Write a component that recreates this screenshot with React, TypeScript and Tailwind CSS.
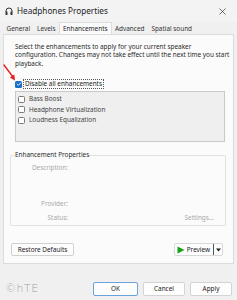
import React from "react";

const font = { fontFamily: '"Noto Sans", "Liberation Sans", sans-serif' };

function Box({ checked }: { checked?: boolean }) {
  if (checked) {
    return (
      <span className="flex h-[7px] w-[7px] shrink-0 items-center justify-center rounded-[1.5px] bg-[#1a6fc9]">
        <svg width="6" height="6" viewBox="0 0 6 6" fill="none">
          <path d="M1.2 3.1 L2.4 4.3 L4.8 1.7" stroke="white" strokeWidth="0.9" strokeLinecap="round" strokeLinejoin="round" />
        </svg>
      </span>
    );
  }
  return <span className="h-[7px] w-[7px] shrink-0 rounded-[1.5px] border border-[#7a7a7a] bg-white" />;
}

function Tab({ label, active }: { label: string; active?: boolean }) {
  return (
    <div
      className={
        active
          ? "flex h-[12px] items-center bg-[#fbfbfb] px-[3px] text-[#1b1b1b] border-x border-t border-[#dcdcdc]"
          : "flex h-[10px] items-center px-[3.5px] text-[#333]"
      }
    >
      {label}
    </div>
  );
}

export default function App() {
  return (
    <div className="relative h-[300px] w-[237px] overflow-hidden bg-[#f0f0f0] text-[6.4px] text-[#222]" style={font}>
      {/* title bar */}
      <div className="flex h-[22px] items-center bg-[#f3f3f3] pl-[5px] pr-[11px]">
        <svg width="8" height="9" viewBox="0 0 8 9" className="shrink-0">
          <path d="M1 5 V4 A3 3 0 0 1 7 4 V5" stroke="#333" strokeWidth="1" fill="none" />
          <rect x="0.5" y="4.5" width="2" height="3.5" rx="0.6" fill="#333" />
          <rect x="5.5" y="4.5" width="2" height="3.5" rx="0.6" fill="#333" />
        </svg>
        <span className="ml-[4px] text-[8.2px] text-[#1c1c1c]">Headphones Properties</span>
        <svg width="7" height="7" viewBox="0 0 7 7" className="ml-auto">
          <path d="M0.5 0.5 L6.5 6.5 M6.5 0.5 L0.5 6.5" stroke="#333" strokeWidth="0.7" />
        </svg>
      </div>

      {/* tabs */}
      <div className="flex h-[12px] items-end pl-[3px] text-[6.4px]">
        <Tab label="General" />
        <Tab label="Levels" />
        <Tab label="Enhancements" active />
        <Tab label="Advanced" />
        <Tab label="Spatial sound" />
      </div>

      {/* page */}
      <div className="mx-[3px] flex h-[230px] flex-col border border-[#dcdcdc] bg-[#fbfbfb] pt-[8px]">
        <p className="pl-[11px] leading-[8.4px] text-[#2a2a2a] whitespace-nowrap">
          Select the enhancements to apply for your current speaker
          <br />
          configuration. Changes may not take effect until the next time you start
          <br />
          playback.
        </p>

        <div className="mt-[11px] flex items-center pl-[11px]">
          <Box checked />
          <span className="ml-[1px] border border-dotted border-[#555] px-[1px] leading-[8px]">Disable all enhancements</span>
        </div>

        <div className="ml-[11px] mr-[8px] mt-[2px] flex h-[51px] flex-col gap-[2.5px] border border-[#c9c9c9] bg-[#efefef] pl-[2px] pt-[3px]">
          {["Bass Boost", "Headphone Virtualization", "Loudness Equalization"].map((t) => (
            <div key={t} className="flex items-center gap-[4px] leading-[8px] text-[#444]">
              <Box />
              <span>{t}</span>
            </div>
          ))}
        </div>

        <div className="relative ml-[6px] mr-[7px] mt-[13px] h-[71px] rounded-[2px] border border-[#e2e2e2]">
          <span className="absolute -top-[5px] left-[4px] bg-[#fbfbfb] leading-[8px] text-[#2a2a2a]">
            Enhancement Properties
          </span>
          <div className="flex h-full flex-col pt-[8px] pr-[11px] text-[#a9a9a9]">
            <div className="w-[57px] text-right leading-[8px]">Description:</div>
            <div className="mt-[28px] w-[57px] text-right leading-[8px]">Provider:</div>
            <div className="mt-[6px] flex items-center leading-[8px]">
              <div className="w-[57px] text-right">Status:</div>
              <div className="ml-auto">Settings...</div>
            </div>
          </div>
        </div>

        <div className="mt-[17px] flex items-center pl-[7px] pr-[10px]">
          <button className="flex h-[13px] w-[63px] items-center justify-center rounded-[2px] border border-[#d0d0d0] bg-[#fdfdfd] text-[#222]">
            Restore Defaults
          </button>
          <div className="ml-auto flex h-[13px] items-center rounded-[2px] border border-[#d8d8d8] bg-[#fdfdfd]">
            <div className="flex items-center gap-[2px] pl-[2px] pr-[3px]">
              <svg width="8" height="8" viewBox="0 0 8 8">
                <path d="M0.5 0.5 L7.5 4 L0.5 7.5 Z" fill="#16a016" />
              </svg>
              <span>Preview</span>
            </div>
            <div className="h-[11px] w-px bg-[#555]" />
            <div className="flex w-[8px] items-center justify-center">
              <svg width="5" height="4" viewBox="0 0 5 4">
                <path d="M0 0.5 H5 L2.5 3.5 Z" fill="#222" />
              </svg>
            </div>
          </div>
        </div>
      </div>

      {/* footer */}
      <div className="mt-[18px] flex items-center pl-[5px] pr-[5px]">
        <span className="text-[11px] leading-[12px] tracking-[0.5px] text-[#a0a0a0]" style={{ fontFamily: '"DejaVu Sans", sans-serif', fontWeight: 200 }}>
          ©hTE
        </span>
        <button className="ml-auto flex h-[14px] w-[45px] items-center justify-center rounded-[2px] border border-[#6aa3dc] bg-[#fdfdfd]">
          OK
        </button>
        <button className="ml-[5px] flex h-[14px] w-[42px] items-center justify-center rounded-[2px] border border-[#d4d4d4] bg-[#fdfdfd]">
          Cancel
        </button>
        <button className="ml-[5px] flex h-[14px] w-[42px] items-center justify-center rounded-[2px] border border-[#d4d4d4] bg-[#fdfdfd]">
          Apply
        </button>
      </div>

      {/* red annotation arrow */}
      <svg className="pointer-events-none absolute left-[2px] top-[64px]" width="16" height="18" viewBox="0 0 16 18">
        <path d="M2 1 L11 13" stroke="#e3201b" strokeWidth="1.4" strokeLinecap="round" />
        <path d="M13 16.5 L7.8 13.6 L12.3 10.4 Z" fill="#e3201b" />
      </svg>
    </div>
  );
}
